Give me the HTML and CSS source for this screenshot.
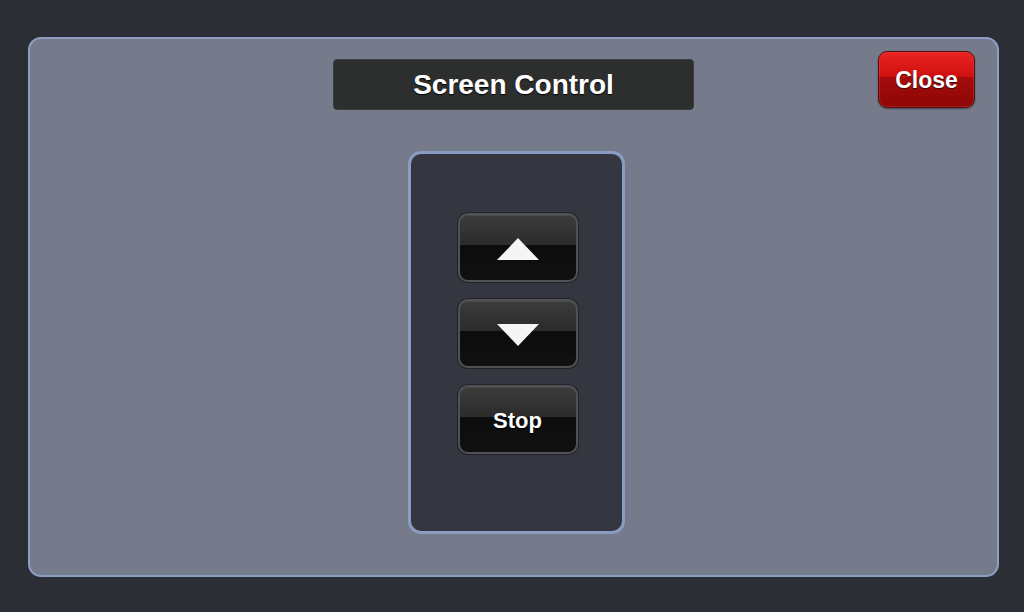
FILE: index.html
```html
<!DOCTYPE html>
<html>
<head>
<meta charset="utf-8">
<link rel="stylesheet" href="styles.css">
</head>
<body>
<div class="panel">
  <div class="title">Screen Control</div>
  <button class="close">Close</button>
  <div class="controls">
    <button class="btn" aria-label="Up">
      <svg width="42" height="22" viewBox="0 0 42 22"><polygon points="21,0 42,22 0,22" fill="#f5f5f5"/></svg>
    </button>
    <button class="btn" aria-label="Down">
      <svg width="42" height="22" viewBox="0 0 42 22"><polygon points="0,0 42,0 21,22" fill="#f5f5f5"/></svg>
    </button>
    <button class="btn">Stop</button>
  </div>
</div>
</body>
</html>
```
FILE: styles.css
```css
html, body {
  margin: 0;
  padding: 0;
  background: #2b2e34;
  width: 1024px;
  height: 612px;
  overflow: hidden;
  font-family: "Liberation Sans", Arial, sans-serif;
}

body {
  padding: 37px 25px 0 28px;
  box-sizing: border-box;
}

.panel {
  position: relative;
  width: 971px;
  height: 540px;
  box-sizing: border-box;
  background: #767b8b;
  border: 2px solid #8d9ec5;
  border-radius: 13px;
  display: flex;
  flex-direction: column;
  align-items: center;
  padding-top: 20px;
}

.title {
  width: 361px;
  height: 51px;
  box-sizing: border-box;
  background: #2d2e2e;
  border: 1px solid #3a3c40;
  border-radius: 4px;
  color: #fff;
  font-weight: bold;
  font-size: 28px;
  display: flex;
  align-items: center;
  justify-content: center;
  text-shadow: 0 1px 1px #000;
}

.close {
  position: absolute;
  top: 12px;
  right: 22px;
  width: 97px;
  height: 57px;
  box-sizing: border-box;
  border: 1px solid #4c1212;
  border-radius: 9px;
  background: linear-gradient(to bottom, #ea2222 0%, #cf1010 45%, #a30b0b 46%, #8f0707 100%);
  box-shadow: inset 0 0 0 1px rgba(255,90,90,0.25), 0 1px 2px rgba(0,0,0,0.4);
  color: #fff;
  font-family: "Liberation Sans", Arial, sans-serif;
  font-weight: bold;
  font-size: 23px;
  text-shadow: 0 1px 1px #300;
  padding: 2px 0 0 0;
  cursor: pointer;
}

.controls {
  margin-top: 41px;
  margin-left: 6px;
  width: 217px;
  height: 383px;
  box-sizing: border-box;
  background: #353740;
  border: 3px solid #8a9cc3;
  border-radius: 13px;
  display: flex;
  flex-direction: column;
  align-items: center;
  padding-top: 59px;
  padding-left: 2px;
  gap: 17px;
}

.btn {
  width: 120px;
  height: 69px;
  box-sizing: border-box;
  border: 2px solid #505154;
  border-radius: 10px;
  background: linear-gradient(to bottom, #3c3c3c 0%, #2b2b2b 46%, #0c0c0c 47%, #111 100%);
  box-shadow: 0 0 0 1px #222328, inset 0 1px 0 rgba(255,255,255,0.08);
  color: #fff;
  font-family: "Liberation Sans", Arial, sans-serif;
  font-weight: bold;
  font-size: 22px;
  text-shadow: 0 1px 1px #000;
  display: flex;
  align-items: center;
  justify-content: center;
  padding: 2px 0 0 0;
  cursor: pointer;
}

.btn svg {
  display: block;
}
```
